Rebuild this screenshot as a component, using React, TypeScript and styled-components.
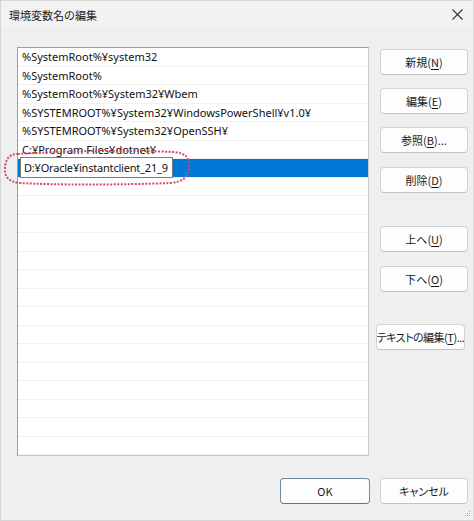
import React from "react";
import styled, { createGlobalStyle } from "styled-components";

const Global = createGlobalStyle`
  html, body { margin: 0; padding: 0; background: #efefef; }
  body { font-family: "Noto Sans", "Noto Sans CJK JP", sans-serif; }
`;

const Window = styled.div`
  position: relative;
  width: 474px;
  height: 521px;
  box-sizing: border-box;
  background: #efefef;
  border: 1px solid #d6d6d6;
  display: flex;
  flex-direction: column;
  overflow: hidden;
`;

const TitleBar = styled.div`
  height: 27px;
  flex-shrink: 0;
  display: flex;
  align-items: center;
  justify-content: space-between;
  padding: 0 10px 0 8px;
  background: #f2f2f2;
`;

const Title = styled.span`
  font-family: "Noto Sans CJK JP", sans-serif;
  font-size: 11px;
  color: #1c1c1c;
`;

const Body = styled.div`
  flex: 1;
  display: flex;
  flex-direction: column;
  padding: 19px 5px 0 16px;
`;

const Main = styled.div`
  display: flex;
  gap: 11px;
`;

const ListBox = styled.div`
  width: 352px;
  height: 409px;
  box-sizing: border-box;
  background: #ffffff;
  border: 1px solid #9e9e9e;
  border-right-color: #c8c8c8;
  border-bottom-color: #c8c8c8;
  display: flex;
  flex-direction: column;
  overflow: hidden;
`;

const Row = styled.div<{ $selected?: boolean }>`
  height: 18.5px;
  flex-shrink: 0;
  box-sizing: border-box;
  display: flex;
  align-items: center;
  padding-left: 4px;
  border-bottom: 1px solid #f1f1f1;
  background: ${(p) => (p.$selected ? "#0078d7" : "transparent")};
  font-family: "Noto Sans", "Noto Sans CJK JP", sans-serif;
  font-size: 11px;
  color: #111;
  white-space: nowrap;
`;

const EditBox = styled.div`
  width: 153px;
  height: 21px;
  flex-shrink: 0;
  margin-left: -2px;
  box-sizing: border-box;
  background: #fff;
  border: 1px solid #7a7a7a;
  display: flex;
  align-items: center;
  padding-left: 3px;
  font-size: 11px;
  letter-spacing: -0.2px;
  color: #111;
  white-space: nowrap;
  overflow: hidden;
`;

const Buttons = styled.div`
  display: flex;
  flex-direction: column;
`;

const Btn = styled.div<{
  $top?: number;
  $shift?: number;
  $default?: boolean;
  $w?: number;
  $tight?: boolean;
}>`
  width: ${(p) => p.$w ?? 88}px;
  height: 26px;
  box-sizing: border-box;
  margin-top: ${(p) => p.$top ?? 0}px;
  margin-left: ${(p) => p.$shift ?? 0}px;
  background: #fdfdfd;
  border: 1px solid ${(p) => (p.$default ? "#6c8aa6" : "#d3d3d3")};
  border-bottom-color: ${(p) => (p.$default ? "#5a7894" : "#c2c2c2")};
  border-radius: 4px;
  display: flex;
  align-items: center;
  justify-content: center;
  font-family: "Noto Sans CJK JP", sans-serif;
  font-feature-settings: "palt";
  font-size: 11px;
  letter-spacing: ${(p) => (p.$tight ? "-0.5px" : "0")};
  color: #1a1a1a;
  white-space: nowrap;
  u { text-decoration: underline; text-underline-offset: 2px; }
`;

const Footer = styled.div`
  display: flex;
  justify-content: flex-end;
  gap: 10px;
  margin-top: 22px;
`;

const Oval = styled.svg`
  position: absolute;
  left: 1px;
  top: 147px;
  pointer-events: none;
`;

const Grip = styled.svg`
  position: absolute;
  right: 2px;
  bottom: 2px;
`;

const items = [
  "%SystemRoot%¥system32",
  "%SystemRoot%",
  "%SystemRoot%¥System32¥Wbem",
  "%SYSTEMROOT%¥System32¥WindowsPowerShell¥v1.0¥",
  "%SYSTEMROOT%¥System32¥OpenSSH¥",
  "C:¥Program Files¥dotnet¥",
];

export default function App() {
  const empties = Array.from({ length: 15 });
  return (
    <>
      <Global />
      <Window>
        <TitleBar>
          <Title>環境変数名の編集</Title>
          <svg width="11" height="11" viewBox="0 0 11 11">
            <path d="M0.5 0.5 L10.5 10.5 M10.5 0.5 L0.5 10.5" stroke="#333" strokeWidth="1.1" />
          </svg>
        </TitleBar>
        <Body>
          <Main>
            <ListBox>
              {items.map((t) => (
                <Row key={t}>{t}</Row>
              ))}
              <Row $selected>
                <EditBox>D:¥Oracle¥instantclient_21_9</EditBox>
              </Row>
              {empties.map((_, i) => (
                <Row key={i} />
              ))}
            </ListBox>
            <Buttons>
              <Btn $top={2}>新規(<u>N</u>)</Btn>
              <Btn $top={13}>編集(<u>E</u>)</Btn>
              <Btn $top={13}>参照(<u>B</u>)...</Btn>
              <Btn $top={14}>削除(<u>D</u>)</Btn>
              <Btn $top={33}>上へ(<u>U</u>)</Btn>
              <Btn $top={14}>下へ(<u>O</u>)</Btn>
              <Btn $top={32} $shift={-4} $w={89} $tight>
                テキストの編集(<u>T</u>)...
              </Btn>
            </Buttons>
          </Main>
          <Footer>
            <Btn $default $w={90}>OK</Btn>
            <Btn>キャンセル</Btn>
          </Footer>
        </Body>
        <Oval width="190" height="38" viewBox="0 0 190 38">
          <path
            d="M16 6 C60 3 130 2 172 4 C184 5 188 10 187 20 C186 30 180 34 168 35 C120 37 50 37 18 35 C6 34 2 28 3 19 C4 10 8 6 16 6 Z"
            fill="none"
            stroke="#d8485f"
            strokeWidth="2"
            strokeDasharray="2 1.5"
          />
        </Oval>
        <Grip width="8" height="8" viewBox="0 0 8 8">
          <rect x="6" y="1" width="1" height="1" fill="#aaa" />
          <rect x="4" y="3" width="1" height="1" fill="#aaa" />
          <rect x="6" y="3" width="1" height="1" fill="#aaa" />
          <rect x="2" y="5" width="1" height="1" fill="#aaa" />
          <rect x="4" y="5" width="1" height="1" fill="#aaa" />
          <rect x="6" y="5" width="1" height="1" fill="#aaa" />
        </Grip>
      </Window>
    </>
  );
}
